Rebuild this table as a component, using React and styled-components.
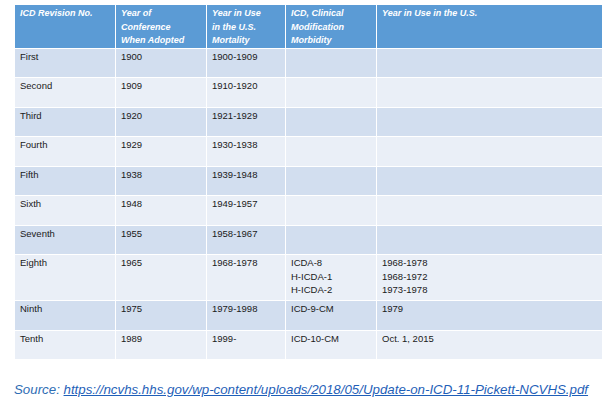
import styled, { createGlobalStyle } from 'styled-components'

const Global = createGlobalStyle`
  html, body {
    margin: 0;
    background: #ffffff;
  }
  body {
    font-family: "Liberation Sans", Arial, sans-serif;
  }
`

const Page = styled.div`
  padding: 5px 11px 0 14px;
`

const Table = styled.table`
  width: 588px;
  border-collapse: collapse;
  table-layout: fixed;
`

const HeadCell = styled.th`
  background: #5b9bd5;
  color: #ffffff;
  font-size: 9px;
  font-weight: bold;
  font-style: italic;
  text-align: left;
  vertical-align: top;
  line-height: 13.5px;
  padding: 2px 5px 0;
  height: 37px;
  box-sizing: border-box;
  border: 1px solid #ffffff;
  border-top: none;
`

const Row = styled.tr`
  background: ${p => (p.$shade ? '#d2deef' : '#eaeff7')};
`

const Cell = styled.td`
  font-size: 9.5px;
  color: #1a1a1a;
  vertical-align: top;
  line-height: 13.5px;
  padding: 1px 5px 0;
  height: ${p => p.$h}px;
  box-sizing: border-box;
  border: 1px solid #ffffff;
`

const Source = styled.p`
  margin: 22px 0 0;
  font-size: 13.3px;
  font-style: italic;
  color: #2e6db4;
  a {
    color: #1f5fb8;
  }
`

const cols = [101, 91, 79, 91, 226]

const head = [
  'ICD Revision No.',
  ['Year of', 'Conference', 'When Adopted'],
  ['Year in Use', 'in the U.S.', 'Mortality'],
  ['ICD, Clinical', 'Modification', 'Morbidity'],
  'Year in Use in the U.S.',
]

const rows = [
  ['First', '1900', '1900-1909', '', ''],
  ['Second', '1909', '1910-1920', '', ''],
  ['Third', '1920', '1921-1929', '', ''],
  ['Fourth', '1929', '1930-1938', '', ''],
  ['Fifth', '1938', '1939-1948', '', ''],
  ['Sixth', '1948', '1949-1957', '', ''],
  ['Seventh', '1955', '1958-1967', '', ''],
  ['Eighth', '1965', '1968-1978', ['ICDA-8', 'H-ICDA-1', 'H-ICDA-2'], ['1968-1978', '1968-1972', '1973-1978']],
  ['Ninth', '1975', '1979-1998', 'ICD-9-CM', '1979'],
  ['Tenth', '1989', '1999-', 'ICD-10-CM', 'Oct. 1, 2015'],
]

function Lines({ value }) {
  if (!Array.isArray(value)) return value
  return value.map((v, i) => (
    <div key={i}>{v}</div>
  ))
}

export default function App() {
  return (
    <Page>
      <Global />
      <Table>
        <colgroup>
          {cols.map((w, i) => <col key={i} style={{ width: w }} />)}
        </colgroup>
        <thead>
          <tr>
            {head.map((h, i) => (
              <HeadCell key={i}><Lines value={h} /></HeadCell>
            ))}
          </tr>
        </thead>
        <tbody>
          {rows.map((r, i) => (
            <Row key={i} $shade={i % 2 === 0}>
              {r.map((c, j) => (
                <Cell key={j} $h={i === 7 ? 46 : 29.5}><Lines value={c} /></Cell>
              ))}
            </Row>
          ))}
        </tbody>
      </Table>
      <Source>
        Source: <a href="#">https://ncvhs.hhs.gov/wp-content/uploads/2018/05/Update-on-ICD-11-Pickett-NCVHS.pdf</a>
      </Source>
    </Page>
  )
}
